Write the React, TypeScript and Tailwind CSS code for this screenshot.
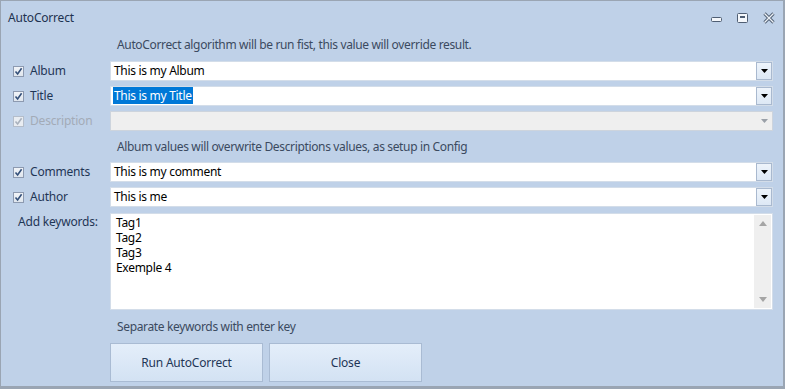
import React from "react";

const font = { fontFamily: '"Segoe UI", "Noto Sans", "Open Sans", sans-serif' };

function Check({ disabled }: { disabled?: boolean }) {
  return (
    <span
      className={`flex h-[11px] w-[11px] items-center justify-center border ${
        disabled ? "border-[#b4bdca] bg-[#e9edf2]" : "border-[#8d9ab0] bg-gradient-to-b from-[#f1f4f8] to-[#dfe6ee]"
      }`}
    >
      <svg width="9" height="9" viewBox="0 0 9 9">
        <path
          d="M1.5 4.5 L3.6 7 L7.6 1.2"
          fill="none"
          stroke={disabled ? "#a9b1bd" : "#34507a"}
          strokeWidth="1.6"
        />
      </svg>
    </span>
  );
}

function Arrow({ color }: { color: string }) {
  return (
    <svg width="7" height="4" viewBox="0 0 7 4">
      <path d="M0 0 H7 L3.5 4 Z" fill={color} />
    </svg>
  );
}

function Combo({ value, selected, disabled }: { value?: string; selected?: boolean; disabled?: boolean }) {
  return (
    <div
      className={`flex h-[20px] items-center border ${
        disabled ? "border-[#cdd4dd] bg-[#efefef]" : "border-[#d3dde9] bg-white"
      }`}
    >
      <div className="flex-1 pl-[2px] text-[12px] leading-[16px] tracking-[-0.3px] text-black">
        {value && (
          <span className={selected ? "bg-[#0078d7] px-[1px] text-white" : "px-[1px]"}>{value}</span>
        )}
      </div>
      {disabled ? (
        <div className="flex h-full w-[16px] items-center justify-center pb-[1px]">
          <Arrow color="#9aa0a8" />
        </div>
      ) : (
        <div className="flex h-[18px] w-[16px] items-center justify-center border border-[#a9b9cf] bg-gradient-to-b from-[#eef4fb] to-[#dde8f5]">
          <Arrow color="#000" />
        </div>
      )}
    </div>
  );
}

function CheckLabel({ label, disabled }: { label: string; disabled?: boolean }) {
  return (
    <div className="flex h-[20px] items-center gap-[6px] pl-[12px]">
      <Check disabled={disabled} />
      <span className={`text-[12px] tracking-[-0.2px] ${disabled ? "text-[#a3abb7]" : "text-[#1f3656]"}`}>{label}</span>
    </div>
  );
}

function Hint({ text }: { text: string }) {
  return (
    <div className="h-[16px] pl-[116px] text-[12px] leading-[16px] tracking-[-0.35px] text-[#3b4a60]">{text}</div>
  );
}

const keywords = ["Tag1", "Tag2", "Tag3", "Exemple 4"];

export default function App() {
  return (
    <div
      className="flex h-[389px] w-[785px] flex-col border-l border-t border-r-2 border-b-[3px] border-[#9aa5b3] bg-[#bfd1e8]"
      style={font}
    >
      <div className="flex h-[33px] items-center justify-between pl-[7px] pr-[8px]">
        <span className="text-[12px] tracking-[-0.2px] text-[#1e3250]">AutoCorrect</span>
        <div className="flex items-center gap-[14px]">
          <svg width="12" height="12" viewBox="0 0 12 12">
            <rect x="0.5" y="5.5" width="10" height="4" rx="1" fill="#f4f7fb" stroke="#4f5e73" />
          </svg>
          <svg width="12" height="12" viewBox="0 0 12 12">
            <rect x="0.5" y="1.5" width="10" height="9" rx="1" fill="#f4f7fb" stroke="#4f5e73" />
            <rect x="3" y="4" width="5" height="2" fill="#4f5e73" />
          </svg>
          <svg width="12" height="12" viewBox="0 0 12 12">
            <path d="M1.5 1.5 L10.5 10.5 M10.5 1.5 L1.5 10.5" stroke="#56657a" strokeWidth="3.2" />
            <path d="M1.5 1.5 L10.5 10.5 M10.5 1.5 L1.5 10.5" stroke="#eef2f7" strokeWidth="1.2" />
          </svg>
        </div>
      </div>

      <div className="mt-[3px]">
        <Hint text="AutoCorrect algorithm will be run fist, this value will override result." />
      </div>

      <div className="mt-[8px] grid grid-cols-[109px_1fr] gap-y-[5px] pr-[10px]">
        <CheckLabel label="Album" />
        <Combo value="This is my Album" />
        <CheckLabel label="Title" />
        <Combo value="This is my Title" selected />
        <CheckLabel label="Description" disabled />
        <Combo disabled />
      </div>

      <div className="mt-[8px]">
        <Hint text="Album values will overwrite Descriptions values, as setup in Config" />
      </div>

      <div className="mt-[7px] grid grid-cols-[109px_1fr] gap-y-[5px] pr-[10px]">
        <CheckLabel label="Comments" />
        <Combo value="This is my comment" />
        <CheckLabel label="Author" />
        <Combo value="This is me" />
      </div>

      <div className="mt-[6px] grid grid-cols-[109px_1fr] pr-[10px]">
        <div className="pl-[17px] pt-[1px] text-[12px] leading-[16px] tracking-[-0.2px] text-[#1f3656]">
          Add keywords:
        </div>
        <div className="flex h-[97px] border border-[#d3dde9] bg-white">
          <div className="flex flex-1 flex-col pl-[5px] pt-[1px] text-[12px] tracking-[-0.3px] text-black">
            {keywords.map((k) => (
              <span key={k} className="h-[15px] leading-[15px]">
                {k}
              </span>
            ))}
          </div>
          <div className="my-[1px] mr-[1px] flex w-[17px] flex-col items-center justify-between bg-[#efefef] py-[6px]">
            <svg width="8" height="5" viewBox="0 0 8 5">
              <path d="M0 5 L4 0 L8 5 Z" fill="#a5a5a5" />
            </svg>
            <svg width="8" height="5" viewBox="0 0 8 5">
              <path d="M0 0 H8 L4 5 Z" fill="#a5a5a5" />
            </svg>
          </div>
        </div>
      </div>

      <div className="mt-[9px]">
        <Hint text="Separate keywords with enter key" />
      </div>

      <div className="mt-[8px] flex gap-[6px] pl-[109px]">
        <button className="h-[39px] w-[153px] border border-[#a9bbd3] bg-gradient-to-b from-[#e4eefa] to-[#d3e2f3] text-[12px] tracking-[-0.2px] text-[#1f3656]">
          Run AutoCorrect
        </button>
        <button className="h-[39px] w-[153px] border border-[#a9bbd3] bg-gradient-to-b from-[#e4eefa] to-[#d3e2f3] text-[12px] tracking-[-0.2px] text-[#1f3656]">
          Close
        </button>
      </div>
    </div>
  );
}
